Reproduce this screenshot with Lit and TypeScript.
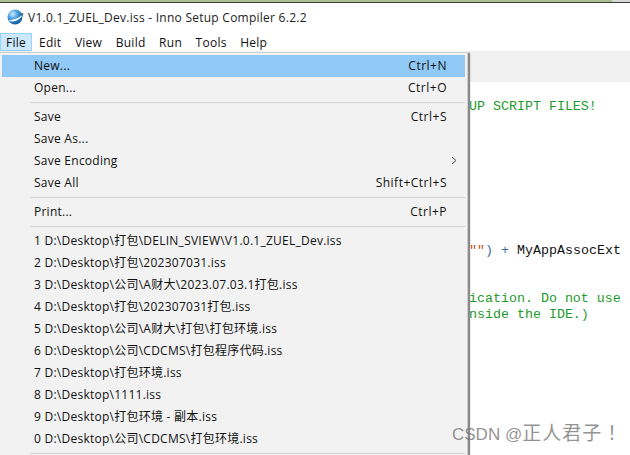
import { LitElement, html, css } from "lit";
import { customElement } from "lit/decorators.js";

type Row = { t: string; s?: string; sub?: boolean; hot?: boolean } | "sep";

const rows: Row[] = [
  { t: "New...", s: "Ctrl+N", hot: true },
  { t: "Open...", s: "Ctrl+O" },
  "sep",
  { t: "Save", s: "Ctrl+S" },
  { t: "Save As..." },
  { t: "Save Encoding", sub: true },
  { t: "Save All", s: "Shift+Ctrl+S" },
  "sep",
  { t: "Print...", s: "Ctrl+P" },
  "sep",
  { t: "1 D:\\Desktop\\打包\\DELIN_SVIEW\\V1.0.1_ZUEL_Dev.iss" },
  { t: "2 D:\\Desktop\\打包\\202307031.iss" },
  { t: "3 D:\\Desktop\\公司\\A财大\\2023.07.03.1打包.iss" },
  { t: "4 D:\\Desktop\\打包\\202307031打包.iss" },
  { t: "5 D:\\Desktop\\公司\\A财大\\打包\\打包环境.iss" },
  { t: "6 D:\\Desktop\\公司\\CDCMS\\打包程序代码.iss" },
  { t: "7 D:\\Desktop\\打包环境.iss" },
  { t: "8 D:\\Desktop\\1111.iss" },
  { t: "9 D:\\Desktop\\打包环境 - 副本.iss" },
  { t: "0 D:\\Desktop\\公司\\CDCMS\\打包环境.iss" },
  "sep",
];

@customElement("app-root")
export class AppRoot extends LitElement {
  static styles = css`
    :host {
      display: block;
      position: relative;
      width: 630px;
      height: 455px;
      overflow: hidden;
      background: #fff;
      font-family: "Open Sans", "Noto Sans CJK SC", sans-serif;
      font-size: 12px;
      letter-spacing: 0.25px;
      color: #111;
    }
    .strip {
      height: 2px;
      background: linear-gradient(to right, #a9c08e 612px, #d8d8d8 612px);
      border-bottom: 1px solid #3a4038;
    }
    .title {
      height: 30px;
      display: flex;
      align-items: center;
      gap: 4px;
      padding: 0 0 2px 7px;
      box-sizing: border-box;
      color: #222;
    }
    .menubar {
      height: 18px;
      display: flex;
      align-items: stretch;
    }
    .mi {
      display: flex;
      align-items: center;
      padding: 0 6px;
      margin-right: 1.6px;
    }
    .mi.on {
      background: #cce8ff;
      box-shadow: inset 0 0 0 1px #99d1ff;
      margin-right: 1px;
    }
    .toolbar {
      height: 31px;
      background: #f0f0f0;
    }
    .editor {
      padding: 1px 0 0 21px;
      font-family: "Liberation Mono", monospace;
      font-size: 13.33px;
      letter-spacing: 0;
      line-height: 16px;
    }
    .ln {
      height: 16px;
      white-space: pre;
    }
    .c {
      color: #1f9a2c;
    }
    .str {
      color: #c8501e;
    }
    .sym {
      color: #3f6f9f;
    }
    .menu {
      position: absolute;
      left: 0;
      top: 52px;
      width: 468px;
      height: 410px;
      box-sizing: border-box;
      background: #f2f2f2;
      border: 1px solid #cfcfcf;
      border-left: none;
      padding: 2px 2px 0 2px;
      box-shadow: 2px 1px 1px #8a8a8a;
    }
    .row {
      height: 22px;
      box-sizing: border-box;
      display: flex;
      align-items: center;
      justify-content: space-between;
      padding: 0 18px 2px 32px;
    }
    .row.hot {
      background: #90c8f6;
    }
    .key {
      letter-spacing: 0.5px;
    }
    .sep {
      height: 1px;
      background: #d4d4d4;
      margin: 3px 0 3px 28px;
    }
    .sub {
      display: block;
      margin-right: -10px;
    }
    .mark {
      position: absolute;
      left: 452px;
      top: 424px;
      color: rgba(110, 110, 110, 0.75);
      font-family: "Liberation Sans", "Noto Sans CJK SC", sans-serif;
      font-size: 17px;
      line-height: 20px;
      letter-spacing: 0;
      white-space: nowrap;
    }
    .cjk {
      font-size: 19px;
      letter-spacing: 1px;
    }
    .bang {
      margin-left: 5px;
    }
  `;

  render() {
    return html`
      <div class="strip"></div>
      <div class="title">
        <svg width="17" height="16" viewBox="0 0 17 16">
          <defs>
            <radialGradient id="g" cx="0.35" cy="0.3" r="0.8">
              <stop offset="0" stop-color="#cfeafc" />
              <stop offset="0.5" stop-color="#2f8fd8" />
              <stop offset="1" stop-color="#0d4f95" />
            </radialGradient>
          </defs>
          <circle cx="8" cy="8" r="7.5" fill="url(#g)" />
          <path d="M1.5 11.5C6 14 12 11.5 16.5 5.5C12 9 6 11 1.5 11.5Z" fill="#fff" />
          <path d="M13.5 3.5L16.5 4.5L15.5 8Z" fill="#5a6a78" />
        </svg>
        <span>V1.0.1_ZUEL_Dev.iss - Inno Setup Compiler 6.2.2</span>
      </div>
      <div class="menubar">
        ${["File", "Edit", "View", "Build", "Run", "Tools", "Help"].map(
          (m, i) => html`<div class="mi ${i === 0 ? "on" : ""}">${m}</div>`
        )}
      </div>
      <div class="toolbar"></div>
      <div class="editor">
        <div class="ln c">; Script generated by the Inno Setup Script Wizard.</div>
        <div class="ln c">; SEE THE DOCUMENTATION FOR DETAILS ON CREATING INNO SETUP SCRIPT FILES!</div>
        ${[0, 1, 2, 3, 4, 5, 6, 7].map(() => html`<div class="ln"></div>`)}
        <div class="ln">#define MyAppAssocKey StringChange(MyAppAssocName, <span class="str">" "</span>, <span class="str">""</span><span class="sym">) +</span> MyAppAssocExt</div>
        <div class="ln"></div>
        <div class="ln"></div>
        <div class="ln c">; NOTE: The value of AppId uniquely identifies this application. Do not use</div>
        <div class="ln c">; (To generate a new GUID, click Tools | Generate GUID inside the IDE.)</div>
      </div>
      <div class="menu">
        ${rows.map((r) =>
          r === "sep"
            ? html`<div class="sep"></div>`
            : html`<div class="row ${r.hot ? "hot" : ""}">
                <span>${r.t}</span>
                ${r.s ? html`<span class="key">${r.s}</span>` : ""}
                ${r.sub
                  ? html`<svg class="sub" width="6" height="9" viewBox="0 0 6 9">
                      <path d="M1 1L5 4.5L1 8" fill="none" stroke="#555" stroke-width="1" />
                    </svg>`
                  : ""}
              </div>`
        )}
      </div>
      <div class="mark">CSDN @<span class="cjk">正人君子<span class="bang">！</span></span></div>
    `;
  }
}
